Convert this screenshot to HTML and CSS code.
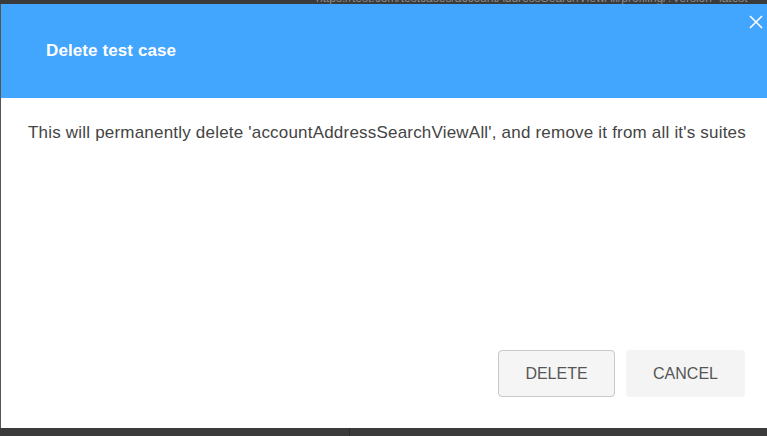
FILE: index.html
```html
<!DOCTYPE html>
<html>
<head>
<meta charset="utf-8">
<link rel="stylesheet" href="styles.css">
</head>
<body>
<div class="backdrop">
  <div class="behind-text">https://test.com/testcases/accountAddressSearchViewAll/profiling/?version=latest</div>
  <div class="modal">
    <div class="modal-header">
      <h2 class="modal-title">Delete test case</h2>
      <button class="close" aria-label="Close">
        <svg width="14" height="14" viewBox="0 0 14 14"><path d="M1 1L13 13M13 1L1 13" stroke="#fff" stroke-width="1.6" fill="none"/></svg>
      </button>
    </div>
    <div class="modal-body">
      <p class="message">This will permanently delete 'accountAddressSearchViewAll', and remove it from all it's suites</p>
    </div>
    <div class="modal-footer">
      <button class="btn btn-outline">DELETE</button>
      <button class="btn btn-flat">CANCEL</button>
    </div>
  </div>
  <div class="bottom-strip"><div class="divider"></div></div>
</div>
</body>
</html>
```
FILE: styles.css
```css
html, body {
  margin: 0;
  padding: 0;
  background: #3b3b3b;
  font-family: "Liberation Sans", Arial, sans-serif;
  overflow: hidden;
}
.backdrop {
  position: relative;
  width: 767px;
  height: 436px;
  padding-top: 4px;
  box-sizing: border-box;
}
.behind-text {
  position: absolute;
  top: -9px;
  left: 316px;
  font-size: 12px;
  color: #8a8a8a;
  white-space: nowrap;
  line-height: 14px;
}
.modal {
  position: relative;
  margin-left: 1px;
  width: 766px;
  height: 424px;
  background: #fff;
  display: flex;
  flex-direction: column;
  box-shadow: -1px 0 0 #555;
}
.modal-header {
  height: 94px;
  background: #42a5fe;
  display: flex;
  align-items: center;
  padding-left: 45px;
  flex: none;
}
.modal-title {
  margin: 0;
  color: #fff;
  font-size: 17px;
  font-weight: bold;
  letter-spacing: 0.1px;
}
.close {
  position: absolute;
  top: 11px;
  right: 4px;
  border: 0;
  background: transparent;
  padding: 0;
  width: 14px;
  height: 14px;
  display: block;
  cursor: pointer;
}
.close svg { display: block; }
.modal-body {
  flex: 1;
  padding: 25px 10px 0 27px;
}
.message {
  margin: 0;
  font-size: 17px;
  line-height: 20px;
  letter-spacing: 0.2px;
  color: #444;
  white-space: nowrap;
}
.modal-footer {
  display: flex;
  justify-content: flex-end;
  gap: 11px;
  padding: 0 22px 31px 0;
}
.btn {
  height: 47px;
  font-family: "Liberation Sans", Arial, sans-serif;
  font-size: 16px;
  color: #555;
  border-radius: 4px;
  padding: 0;
  cursor: pointer;
}
.btn-outline {
  width: 117px;
  background: #f5f5f5;
  border: 1px solid #c8c8c8;
}
.btn-flat {
  width: 119px;
  background: #f4f4f4;
  border: 0;
}
.bottom-strip {
  height: 8px;
  position: relative;
}
.divider {
  position: absolute;
  left: 349px;
  top: 0;
  width: 1px;
  height: 8px;
  background: #2e2e2e;
}
```
